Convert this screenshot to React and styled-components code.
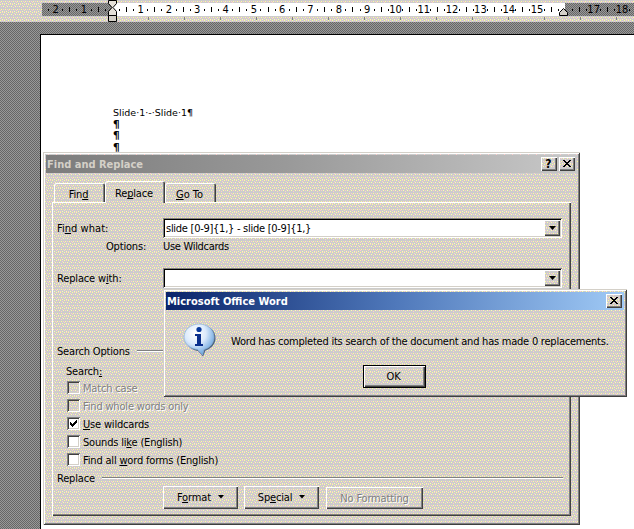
import React from "react";
import styled, { createGlobalStyle, css } from "styled-components";

const GlobalStyle = createGlobalStyle`
  * {
    box-sizing: border-box;
  }

  body {
    margin: 0;
    overflow: hidden;
    font-family: "DejaVu Sans Condensed", "DejaVu Sans", sans-serif;
    font-stretch: condensed;
    font-size: 11px;
    line-height: 14px;
    color: #000;
  }
`;

// Repeating vector tile, one entry per coloured pixel: [x, y, colour]
const tile = (size, base, pixels) => {
  const rects = pixels
    .map(([x, y, fill]) => `<rect x='${x}' y='${y}' width='1' height='1' fill='${fill}'/>`)
    .join("");
  const svg = `<svg xmlns='http://www.w3.org/2000/svg' width='${size}' height='${size}' shape-rendering='crispEdges'><rect width='${size}' height='${size}' fill='${base}'/>${rects}</svg>`;
  return `url("data:image/svg+xml,${encodeURIComponent(svg).replace(/'/g, "%27")}")`;
};

// 256 colour palette look: grey with yellow and pink pixels
const faceTile = tile(8, "#cccccc", [
  [1, 1, "#ffff99"],
  [5, 1, "#ffff99"],
  [2, 3, "#ffffa8"],
  [6, 3, "#ffffa8"],
  [0, 4, "#ffff99"],
  [4, 4, "#ffff99"],
  [3, 6, "#ffffa8"],
  [7, 6, "#ffffa8"],
  [3, 1, "#ffcccc"],
  [7, 1, "#ffcccc"],
  [0, 2, "#ffcccc"],
  [4, 3, "#ffcccc"],
  [2, 4, "#ffcccc"],
  [6, 5, "#ffcccc"],
  [1, 6, "#ffcccc"],
  [5, 7, "#ffcccc"],
]);

const checkerTile = tile(
  8,
  "#999999",
  Array.from({ length: 64 }, (_, i) => [i % 8, Math.floor(i / 8), "#666666"]).filter(
    ([x, y]) => (x + y) % 2 === 0
  )
);

// fixed attachment keeps the pattern continuous across nested surfaces
const face = css`
  background: #d4d0c8 ${faceTile} fixed;
`;

const darkChecker = css`
  background: #808080 ${checkerTile} fixed;
`;

const bevel = css`
  box-shadow: inset 1px 1px #ffffff, inset -1px -1px #404040,
    inset -2px -2px #808080;
`;

const UNIT = 7.08;
const marks = [];
for (let k = -10; k <= 73; k++) {
  if (k === 0 || k === 64) marks.push("");
  else if (k % 4 === 0) marks.push(String(Math.abs(k / 4)));
  else if (k % 2 === 0) marks.push("|");
  else marks.push(".");
}

function Ruler() {
  return (
    <RulerBar>
      <Strip>
        <Marks>
          {marks.map((m, i) => (
            <Mark key={i}>
              {m === "|" ? <Tick /> : m === "." ? <Dot /> : m}
            </Mark>
          ))}
        </Marks>
      </Strip>
      <TabStops>
        {Array.from({ length: 14 }, (_, i) => (
          <TabStop key={i} />
        ))}
      </TabStops>
      <Indent $left={108} $top={0} width="9" height="22" viewBox="0 0 9 22">
        <path d="M.5.5h8v3l-3.5 4 3.5 4v4h-8v-4l3.500-4-3.500-4z" fill="#e4e0d8" stroke="#000" />
        <path d="M.5 15.500h8v6h-8z" fill="#d4d0c8" stroke="#000" />
      </Indent>
      <Indent $left={559} $top={8} width="9" height="8" viewBox="0 0 9 8">
        <path d="M4.500.5l4 4v3h-8v-3z" fill="#d4d0c8" stroke="#000" />
      </Indent>
    </RulerBar>
  );
}

function Cross() {
  return (
    <svg width="8" height="7" viewBox="0 0 8 7" shapeRendering="crispEdges">
      <path d="M0 0h2v1h1v1h2V1h1V0h2v1H7v1H6v1H5v1h1v1h1v1h1v1H6V6H5V5H3v1H2v1H0V6h1V5h1V4h1V3H2V2H1V1H0z" />
    </svg>
  );
}

function Arrow({ size = 7 }) {
  const h = (size + 1) / 2;
  return (
    <svg width={size} height={h} viewBox={`0 0 ${size} ${h}`}>
      <path d={`M0 0H${size}L${size / 2} ${h}z`} />
    </svg>
  );
}

function ComboBox({ value }) {
  return (
    <Combo>
      <ComboText>{value}</ComboText>
      <DropButton>
        <Arrow />
      </DropButton>
    </Combo>
  );
}

function Option({ checked, disabled, children }) {
  return (
    <OptionRow>
      <Box $disabled={disabled}>
        {checked && (
          <svg width="7" height="7" viewBox="0 0 7 7" shapeRendering="crispEdges">
            <path d="M0 2h1v1h1v1h1V3h1V2h1V1h1V0h1v3H6v1H5v1H4v1H3v1H2V6H1V5H0z" />
          </svg>
        )}
      </Box>
      <Text $disabled={disabled}>{children}</Text>
    </OptionRow>
  );
}

function InfoIcon() {
  return (
    <svg width="34" height="34" viewBox="0 0 34 34">
      <defs>
        <radialGradient id="bubble" cx="38%" cy="30%" r="70%">
          <stop offset="0" stopColor="#ffffff" />
          <stop offset=".5" stopColor="#dceafb" />
          <stop offset="1" stopColor="#6ca6e0" />
        </radialGradient>
      </defs>
      <path
        d="M17 2C26 2 32.500 7.500 32.500 15c0 6-4 10.500-10 12.500l-2.500 6L15 28C8 27 2.500 22 2.500 15S8 2 17 2z"
        fill="#4c6480"
      />
      <path
        d="M16 1c8.500 0 15 5.500 15 13 0 6-4 11-10 12.500L19.500 32l-5-5.500C7.500 26 1 21 1 14S7.500 1 16 1z"
        fill="url(#bubble)"
        stroke="#8db2d8"
        strokeWidth=".7"
      />
      <circle cx="16" cy="6.500" r="2.600" fill="#0a3a9c" />
      <path d="M12 11h6v10h2v2h-8v-2h2v-8h-2z" fill="#0a2f8c" />
    </svg>
  );
}

function FindDialog() {
  return (
    <FindWindow>
      <TitleBar $inactive>
        <Title $inactive>Find and Replace</Title>
        <CaptionButton>
          <Help>?</Help>
        </CaptionButton>
        <CaptionButton>
          <Cross />
        </CaptionButton>
      </TitleBar>
      <Tabs>
        <Tab $width={51}>
          <Text>Fin<u>d</u></Text>
        </Tab>
        <Tab $width={60} $active>
          <Text>Re<u>p</u>lace</Text>
        </Tab>
        <Tab $width={51}>
          <Text $spacing={0}><u>G</u>o To</Text>
        </Tab>
      </Tabs>
      <Panel>
        <Field>
          <Text $spacing={0.05}>Fi<u>n</u>d what:</Text>
          <ComboBox value="slide [0-9]{1,} - slide [0-9]{1,}" />
        </Field>
        <OptionsLine>
          <Text>Options:</Text>
          <Text $spacing={-0.3}>Use Wildcards</Text>
        </OptionsLine>
        <Field>
          <Text $spacing={-0.15}>Replace w<u>i</u>th:</Text>
          <ComboBox value="" />
        </Field>
        <Divider $top={56}>
          <Text>Search Options</Text>
          <Line />
        </Divider>
        <Options>
          <SearchLabel>Search<u>:</u></SearchLabel>
          <Option disabled>Match case</Option>
          <Option disabled>Find whole words only</Option>
          <Option checked><u>U</u>se wildcards</Option>
          <Option>Sounds li<u>k</u>e (English)</Option>
          <Option>Find all <u>w</u>ord forms (English)</Option>
        </Options>
        <Divider $top={3}>
          <Text>Replace</Text>
          <Line />
        </Divider>
        <Actions>
          <Button $width={75}>
            <Text $spacing={-0.1}>F<u>o</u>rmat</Text>
            <Arrow size={6} />
          </Button>
          <Button $width={75}>
            <Text>Sp<u>e</u>cial</Text>
            <Arrow size={6} />
          </Button>
          <Button $width={97} $small>
            <Text $disabled>No Formatting</Text>
          </Button>
        </Actions>
      </Panel>
    </FindWindow>
  );
}

function MessageBox() {
  return (
    <MessageWindow>
      <TitleBar>
        <Title>Microsoft Office Word</Title>
        <CaptionButton>
          <Cross />
        </CaptionButton>
      </TitleBar>
      <Message>
        <InfoIcon />
        <MessageText $spacing={-0.23}>
          Word has completed its search of the document and has made 0 replacements.
        </MessageText>
      </Message>
      <OkButton>
        <Text>OK</Text>
      </OkButton>
    </MessageWindow>
  );
}

export default function App() {
  return (
    <Screen>
      <GlobalStyle />
      <Ruler />
      <Page>
        <DocLine>Slide·1·-·Slide·1¶</DocLine>
        <DocLine $mark>¶</DocLine>
        <DocLine $mark>¶</DocLine>
        <DocLine $mark>¶</DocLine>
      </Page>
      <FindDialog />
      <MessageBox />
    </Screen>
  );
}

const Screen = styled.div`
  position: relative;
  display: flex;
  flex-direction: column;
  width: 634px;
  height: 529px;
  overflow: hidden;
  ${darkChecker}
`;

const RulerBar = styled.div`
  position: relative;
  height: 22px;
  flex: none;
  padding: 3px 0 0 42px;
  overflow: hidden;
  ${face}
`;

const Strip = styled.div`
  height: 13px;
  overflow: hidden;
  background: linear-gradient(#fff, #fff) 71px 0 / 452px 13px no-repeat,
    ${checkerTile} fixed;
`;

const Marks = styled.div`
  display: grid;
  grid-template-columns: repeat(${marks.length}, ${UNIT}px);
  margin-left: -4px;
  height: 13px;
`;

const Mark = styled.span`
  display: flex;
  align-items: center;
  justify-content: center;
  font-size: 11px;
  line-height: 13px;
  white-space: nowrap;
`;

const Tick = styled.i`
  flex: none;
  width: 1px;
  height: 5px;
  background: #000;
`;

const Dot = styled.i`
  flex: none;
  width: 1px;
  height: 2px;
  background: #000;
`;

const TabStops = styled.div`
  display: flex;
  gap: 35px;
  padding: 1px 0 0 106px;
`;

const TabStop = styled.i`
  flex: none;
  width: 1px;
  height: 3px;
  background: #808080;
`;

const Indent = styled.svg`
  position: absolute;
  left: ${(p) => p.$left}px;
  top: ${(p) => p.$top}px;
`;

const Page = styled.div`
  flex: 1;
  margin: 12px 0 0 40px;
  padding: 72px 0 0 72px;
  background: #fff;
  border-top: 1px solid #000;
  border-left: 1px solid #000;
`;

const DocLine = styled.div`
  height: ${(p) => (p.$mark ? 11.5 : 10.5)}px;
  font-family: "DejaVu Sans", sans-serif;
  font-stretch: normal;
  font-size: ${(p) => (p.$mark ? 10.5 : 9.5)}px;
  font-weight: ${(p) => (p.$mark ? "bold" : "normal")};
  line-height: 12px;
`;

const Window = styled.div`
  position: absolute;
  display: flex;
  flex-direction: column;
  padding: 3px;
  ${face}
  box-shadow: inset 1px 1px #d4d0c8, inset -1px -1px #404040,
    inset 2px 2px #ffffff, inset -2px -2px #808080;
`;

const FindWindow = styled(Window)`
  left: 43px;
  top: 152px;
  width: 537px;
  height: 373px;
`;

const MessageWindow = styled(Window)`
  left: 163px;
  top: 289px;
  width: 464px;
  height: 108px;
`;

const TitleBar = styled.div`
  display: flex;
  align-items: center;
  gap: 2px;
  height: 18px;
  flex: none;
  padding: 0 2px 0 1px;
  background: ${(p) =>
    p.$inactive
      ? "linear-gradient(90deg, #7c7c7c, #999999 45%, #c8c8c8)"
      : "linear-gradient(90deg, #0a246a, #4f78ba 50%, #a0caf6)"};
`;

const Title = styled.span`
  flex: 1;
  padding-top: 2px;
  font-weight: bold;
  white-space: nowrap;
  color: ${(p) => (p.$inactive ? "#d4d0c8" : "#fff")};
`;

const CaptionButton = styled.span`
  display: flex;
  align-items: center;
  justify-content: center;
  width: 16px;
  height: 14px;
  padding: 0 1px 1px 0;
  ${face}
  ${bevel}
`;

const Help = styled.b`
  font-size: 12px;
  line-height: 12px;
`;

const Text = styled.span`
  padding-top: 2px;
  white-space: nowrap;
  letter-spacing: ${(p) => p.$spacing ?? -0.18}px;
  color: ${(p) => (p.$disabled ? "#808080" : "#000")};
  text-shadow: ${(p) => (p.$disabled ? "1px 1px #fff" : "none")};

  u {
    text-underline-offset: 1px;
    text-decoration-thickness: 1px;
    text-decoration-skip-ink: none;
  }
`;

const SearchLabel = styled(Text)`
  height: 15px;
`;

const MessageText = styled(Text)`
  padding-top: 4px;
`;

const Tabs = styled.div`
  display: flex;
  align-items: flex-end;
  height: 29px;
  flex: none;
  padding-left: 8px;
`;

const Tab = styled.div`
  display: flex;
  align-items: center;
  justify-content: center;
  position: relative;
  z-index: ${(p) => (p.$active ? 1 : 0)};
  width: ${(p) => p.$width}px;
  height: ${(p) => (p.$active ? 22 : 19)}px;
  margin-bottom: ${(p) => (p.$active ? -1 : 0)}px;
  padding: 2px 2px 0 0;
  border-radius: 2px 2px 0 0;
  ${face}
  box-shadow: inset 1px 1px #fff, inset -1px 0 #404040, inset -2px 0 #808080;
`;

const Panel = styled.div`
  display: flex;
  flex-direction: column;
  width: 519px;
  height: 314px;
  margin-left: 6px;
  padding: 16px 8px 0 5px;
  box-shadow: inset 1px 1px #fff, inset -1px -1px #404040,
    inset -2px -2px #808080;
`;

const Field = styled.div`
  display: grid;
  grid-template-columns: 106px 399px;
  align-items: center;
  height: 20px;
`;

const Combo = styled.div`
  display: flex;
  height: 20px;
  padding: 2px;
  background: #fff;
  box-shadow: inset 1px 1px #808080, inset -1px -1px #fff,
    inset 2px 2px #000, inset -2px -2px #d4d0c8;
`;

const ComboText = styled.span`
  flex: 1;
  padding: 2px 0 0 1px;
  letter-spacing: -0.27px;
  white-space: pre;
`;

const DropButton = styled.span`
  display: flex;
  align-items: center;
  justify-content: center;
  width: 16px;
  height: 16px;
  ${face}
  ${bevel}
`;

const OptionsLine = styled.div`
  display: grid;
  grid-template-columns: 57px auto;
  height: 30px;
  padding: 0 0 0 49px;
`;

const Divider = styled.div`
  display: flex;
  align-items: center;
  gap: 7px;
  height: 14px;
  margin-top: ${(p) => p.$top}px;
`;

const Line = styled.i`
  flex: 1;
  height: 2px;
  background: #fff;
  border-top: 1px solid #808080;
`;

const Options = styled.div`
  display: flex;
  flex-direction: column;
  padding: 5px 0 0 9px;
`;

const OptionRow = styled.div`
  display: flex;
  align-items: center;
  gap: 3px;
  height: 18px;
  padding: 1px 0 0 1px;
`;

const Box = styled.span`
  display: flex;
  align-items: center;
  justify-content: center;
  width: 13px;
  height: 13px;
  ${face}
  ${(p) => !p.$disabled && "background: #fff;"}
  box-shadow: inset 1px 1px #808080, inset -1px -1px #fff,
    inset 2px 2px #404040, inset -2px -2px #d4d0c8;
`;

const Actions = styled.div`
  display: flex;
  align-items: flex-end;
  gap: 6px;
  padding: 1px 0 0 106px;
`;

const Button = styled.button`
  display: flex;
  align-items: center;
  justify-content: center;
  gap: 7px;
  width: ${(p) => p.$width}px;
  height: ${(p) => (p.$small ? 22 : 23)}px;
  margin-left: ${(p) => (p.$small ? 1 : 0)}px;
  padding: 0 0 1px;
  border: 0;
  color: #000;
  font: inherit;
  ${face}
  ${bevel}
`;

const Message = styled.div`
  display: flex;
  align-items: center;
  gap: 14px;
  height: 34px;
  margin: 13px 0 8px 17px;
`;

const OkButton = styled(Button)`
  align-self: flex-start;
  width: 63px;
  height: 23px;
  margin-left: 197px;
  padding: 0 2px 1px 0;
  border: 1px solid #000;
`;
